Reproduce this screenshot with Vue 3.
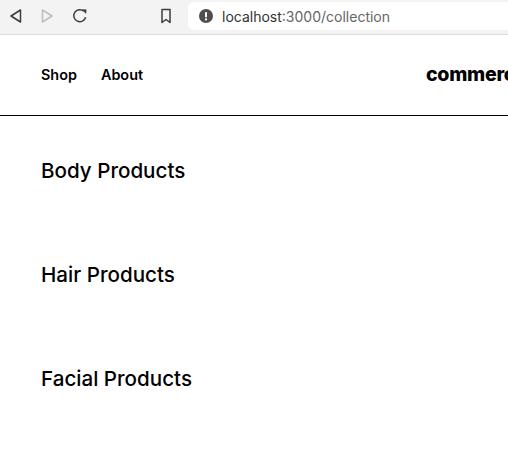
<template>
  <div class="page">
    <div class="chrome">
      <svg class="ic back" width="14" height="16" viewBox="0 0 14 16"><path d="M11.5 2 L2 8 L11.5 14 Z" fill="none" stroke="#3c3c3c" stroke-width="1.5" stroke-linejoin="round"/></svg>
      <svg class="ic fwd" width="14" height="16" viewBox="0 0 14 16"><path d="M1.5 2 L11 8 L1.5 14 Z" fill="none" stroke="#bdbdbd" stroke-width="1.5" stroke-linejoin="round"/></svg>
      <svg class="ic reload" width="16" height="16" viewBox="0 0 16 16"><path d="M13.6 9.2 A6 6 0 1 1 11.8 3.2" fill="none" stroke="#3c3c3c" stroke-width="1.5"/><path d="M10 1.2 L14.6 1.6 L14 6 Z" fill="#3c3c3c"/></svg>
      <svg class="ic mark" width="12" height="16" viewBox="0 0 12 16"><path d="M2 1.5 H10 V14.5 L6 11.5 L2 14.5 Z" fill="none" stroke="#3c3c3c" stroke-width="1.5" stroke-linejoin="round"/></svg>
      <div class="url">
        <svg class="alert" width="14" height="14" viewBox="0 0 14 14"><circle cx="7" cy="7" r="7" fill="#4e4e4e"/><rect x="6" y="3" width="2" height="5.4" rx="0.8" fill="#fff"/><circle cx="7" cy="10.4" r="1.1" fill="#fff"/></svg>
        <span class="host">localhost</span><span class="rest">:3000/collection</span>
      </div>
    </div>
    <header class="nav">
      <nav class="links"><a>Shop</a><a>About</a></nav>
      <div class="logo">commerce</div>
    </header>
    <main class="list">
      <h2 v-for="t in titles" :key="t">{{ t }}</h2>
    </main>
  </div>
</template>

<script setup>
const titles = ['Body Products', 'Hair Products', 'Facial Products']
</script>

<style>
html, body { margin: 0; overflow: hidden; background: #fff; }
</style>

<style scoped>
.page { width: 508px; height: 459px; overflow: hidden; font-family: "Inter", "Liberation Sans", sans-serif; color: #000; }
.chrome { height: 35px; box-sizing: border-box; background: #f3f3f3; border-bottom: 1px solid #dcdcdc; display: flex; align-items: center; padding: 0 0 2px 9px; white-space: nowrap; overflow: hidden; }
.ic { flex: none; }
.fwd { margin-left: 18px; }
.reload { margin-left: 17px; }
.mark { margin-left: 72px; }
.url { margin-left: 16px; flex: none; width: 340px; height: 28px; background: #fff; border-radius: 6px; display: flex; align-items: center; padding-left: 11px; box-sizing: border-box; font-size: 14px; }
.alert { margin-right: 9px; flex: none; }
.host { color: #333; }
.rest { color: #666; }
.nav { height: 81px; box-sizing: border-box; border-bottom: 1px solid #000; display: flex; align-items: center; padding: 0 0 2px 41px; white-space: nowrap; overflow: hidden; }
.links { flex: none; display: flex; gap: 24px; font-size: 14.4px; font-weight: 600; width: 385px; }
.logo { flex: none; font-size: 19.6px; font-weight: 800; letter-spacing: -0.3px; }
.list { padding: 42px 0 0 41px; }
h2 { margin: 0 0 78px; font-size: 20.6px; line-height: 26px; font-weight: 500; }
</style>
